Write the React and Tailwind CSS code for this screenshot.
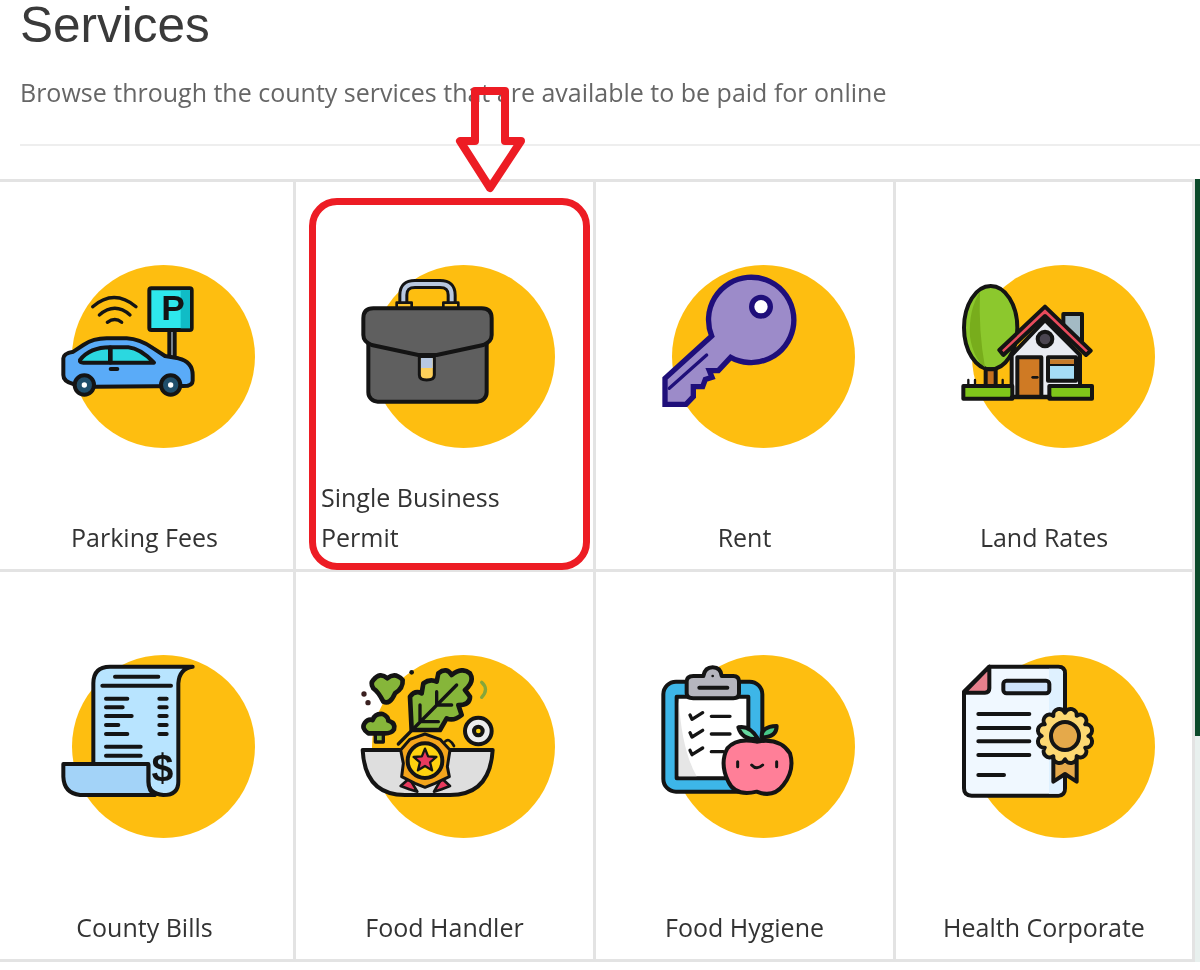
const INK = '#141414';

// scalloped edge for the seal
const scallop = (cx, cy, r, n) => {
  let d = '';
  for (let i = 0; i <= n; i++) {
    const a = (i / n) * Math.PI * 2 - Math.PI / 2;
    const x = (cx + r * Math.cos(a)).toFixed(1);
    const y = (cy + r * Math.sin(a)).toFixed(1);
    const bump = (r * Math.PI) / n;
    d += i === 0 ? `M${x},${y}` : `A${bump.toFixed(1)},${bump.toFixed(1)} 0 0 1 ${x},${y}`;
  }
  return d + 'Z';
};

function IconArt({ wide, children }) {
  return (
    <svg
      viewBox={wide ? '0 0 780 600' : '0 0 720 600'}
      className={`absolute -left-8 -top-[5px] h-[200px] blur-[0.6px] ${wide ? 'w-[260px]' : 'w-[240px]'}`}
      fill="none"
      stroke={INK}
      strokeWidth="12"
      strokeLinecap="round"
      strokeLinejoin="round"
    >
      {children}
    </svg>
  );
}

function ParkingIcon() {
  return (
    <IconArt>
      <rect x="388" y="208" width="16" height="85" fill="#a9b8c8" />
      <rect x="328" y="85" width="127" height="125" rx="6" fill="#2ee8ec" />
      <path d="M422,90 H450 V205 H422 Z" fill="#10bcc6" stroke="none" />
      <text x="364" y="180" fontSize="106" fontWeight="700" fill={INK} stroke="none" className="font-['Liberation_Sans']">P</text>
      <path d="M158,140 Q222,85 288,140 M178,165 Q225,125 270,165 M202,187 Q225,170 245,187" strokeWidth="10" />
      <path
        d="M70,295 Q70,280 100,275 L130,255 Q160,235 200,235 L260,235 Q300,237 340,265 L375,288 L415,295 Q458,305 458,345 L458,362 Q458,378 430,378 L165,380 L100,372 Q70,365 70,345 Z"
        fill="#5aabf8"
      />
      <path d="M120,300 Q150,262 210,262 L210,308 L130,308 Q118,308 120,300 Z" fill="#2bd8e0" />
      <path d="M212,262 L265,262 Q300,265 342,308 L212,308 Z" fill="#2bd8e0" />
      <path d="M212,327 H232" />
      <circle cx="133" cy="375" r="29" fill="#1f4e6b" />
      <circle cx="133" cy="375" r="8" fill="#fff" stroke="none" />
      <circle cx="392" cy="375" r="29" fill="#1f4e6b" />
      <circle cx="392" cy="375" r="8" fill="#fff" stroke="none" />
    </IconArt>
  );
}

function BriefcaseIcon() {
  return (
    <IconArt>
      <path d="M190,130 V105 Q190,72 225,72 H300 Q335,72 335,105 V130" stroke={INK} strokeWidth="30" />
      <path d="M190,130 V105 Q190,72 225,72 H300 Q335,72 335,105 V130" stroke="#b8c8e0" strokeWidth="12" />
      <rect x="170" y="128" width="45" height="18" fill="#fbc531" strokeWidth="8" />
      <rect x="310" y="128" width="45" height="18" fill="#fbc531" strokeWidth="8" />
      <rect x="85" y="225" width="355" height="200" rx="28" fill="#5f5f5f" />
      <path
        d="M100,145 H425 Q455,145 455,175 V225 Q455,245 430,255 L290,285 H235 L95,255 Q70,245 70,225 V175 Q70,145 100,145 Z"
        fill="#5f5f5f"
      />
      <path d="M238,290 H283 V345 Q283,360 260,360 Q238,360 238,345 Z" fill="#fdd05a" strokeWidth="9" />
      <rect x="243" y="294" width="35" height="30" fill="#b8c8e0" stroke="none" />
    </IconArt>
  );
}

function KeyIcon() {
  return (
    <IconArt>
      <g stroke="#1f0f7a" strokeWidth="16" strokeLinejoin="miter">
        <path
          d="M215,228 A128,128 0 1 1 272,292 L235,332 H208 L216,352 L196,358 L188,380 H160 V410 L138,433 H75 V355 Z"
          fill="#9c8bc9"
        />
        <circle cx="363" cy="140" r="28" fill="#fff" />
        <path d="M200,285 L88,385" strokeWidth="10" />
      </g>
    </IconArt>
  );
}

function HouseIcon() {
  return (
    <IconArt wide>
      <ellipse cx="152" cy="203" rx="80" ry="125" fill="#8cc82d" />
      <path d="M120,95 Q85,150 90,230 Q100,295 135,322 Q115,210 120,95 Z" fill="#78ad1c" stroke="none" />
      <rect x="137" y="328" width="30" height="50" fill="#c5701e" />
      <path d="M85,360 V378 M105,360 V378 M188,360 V378" strokeWidth="7" />
      <rect x="370" y="162" width="56" height="80" fill="#a3bac4" />
      <path d="M215,285 L315,180 L420,285 V410 H215 Z" fill="#e8ebf2" />
      <path d="M178,270 L315,140 L452,272 L438,285 L315,168 L190,285 Z" fill="#e84b5c" />
      <circle cx="315" cy="237" r="22" fill="#4a4550" />
      <rect x="232" y="292" width="72" height="118" fill="#cf7a24" />
      <path d="M278,352 H292" strokeWidth="8" />
      <rect x="324" y="292" width="84" height="70" fill="#a5dcf5" />
      <rect x="330" y="298" width="72" height="17" fill="#c77b2a" stroke="none" />
      <path d="M324,315 H408" strokeWidth="6" />
      <rect x="70" y="378" width="147" height="38" fill="#7fc61a" />
      <rect x="328" y="378" width="128" height="38" fill="#7fc61a" />
      <path d="M215,412 H330" />
    </IconArt>
  );
}

function ReceiptIcon() {
  return (
    <IconArt>
      <path d="M160,345 V100 Q160,50 210,50 H458 Q418,55 415,100 V395 Q415,435 370,435 Q325,430 325,395 V345 Z" fill="#b8e4ff" />
      <path d="M70,342 H325 V395 Q325,422 345,435 H120 Q72,430 70,380 Z" fill="#a3d3f8" />
      <path d="M225,80 H355 M187,107 H393 M198,146 H262 M198,172 H248 M198,198 H275 M198,225 H235 M198,252 H262 M198,290 H302 M198,317 H302 M358,146 H380 M358,172 H380 M358,198 H380 M358,225 H380 M358,252 H380" />
      <text x="367" y="393" fontSize="118" fontWeight="700" fill={INK} stroke="none" textAnchor="middle" className="font-['Liberation_Sans']">$</text>
    </IconArt>
  );
}

function FoodIcon() {
  const star = [];
  for (let i = 0; i < 10; i++) {
    const r = i % 2 ? 16 : 36;
    const a = (i / 10) * Math.PI * 2 - Math.PI / 2;
    star.push(`${(255 + r * Math.cos(a)).toFixed(1)},${(332 + r * Math.sin(a)).toFixed(1)}`);
  }
  return (
    <IconArt>
      <path d="M215,240 L210,140 Q225,120 245,130 L250,100 Q270,85 290,95 L295,70 Q320,50 335,75 Q365,50 390,70 Q405,95 375,120 L390,140 Q390,165 355,165 L365,195 Q340,215 320,205 L300,240 Z" fill="#86b63a" strokeWidth="14" />
      <path d="M175,282 L350,105 M240,215 V165 M240,215 H295 M290,165 V125 M290,165 H335" strokeWidth="10" />
      <path d="M100,90 Q120,65 142,85 Q165,65 188,90 Q190,115 165,130 Q150,165 130,155 Q115,125 100,115 Q90,100 100,90 Z" fill="#86b63a" strokeWidth="14" />
      <path d="M85,250 Q62,235 75,218 Q85,205 98,210 Q105,190 128,192 Q145,200 145,212 Q168,220 162,238 Q155,250 135,250 Z" fill="#86b63a" strokeWidth="14" />
      <rect x="106" y="252" width="24" height="24" fill="#86b63a" strokeWidth="10" />
      <circle cx="215" cy="67" r="7" fill={INK} stroke="none" />
      <circle cx="72" cy="132" r="8" fill="#3a2020" stroke="none" />
      <circle cx="84" cy="158" r="8" fill="#3a2020" stroke="none" />
      <path d="M425,97 Q448,118 425,142" stroke="#86a63a" strokeWidth="10" />
      <circle cx="415" cy="243" r="40" fill="#ececec" />
      <circle cx="415" cy="243" r="13" fill="#fdd20f" />
      <path d="M315,275 Q328,262 342,288" strokeWidth="8" />
      <path d="M68,300 H458 Q450,435 330,435 H195 Q75,435 68,300 Z" fill="#dedede" />
      <path d="M182,408 L208,385 L232,425 L208,418 Z M330,408 L305,385 L282,425 L305,418 Z" fill="#e83a5e" strokeWidth="8" />
      <polygon points="255,252 300,268 330,300 322,350 328,380 285,400 255,412 225,400 185,380 190,340 182,300 210,268" fill="#f4a51c" strokeWidth="9" />
      <circle cx="255" cy="332" r="52" fill="#fdd20f" />
      <polygon points={star.join(' ')} fill="#e83a5e" strokeWidth="7" />
    </IconArt>
  );
}

function HygieneIcon() {
  return (
    <IconArt>
      <rect x="70" y="95" width="297" height="330" rx="38" fill="#3db6e8" />
      <rect x="110" y="140" width="215" height="245" fill="#fff" />
      <path d="M116,146 Q125,300 170,379 H116 Z" fill="#e6e6e6" stroke="none" />
      <path d="M140,95 Q140,78 160,78 H190 Q195,52 218,52 Q242,52 245,78 H280 Q297,78 297,95 V130 Q297,145 280,145 H160 Q140,145 140,130 Z" fill="#b5b5be" />
      <circle cx="218" cy="78" r="4" fill={INK} stroke="none" />
      <path d="M178,113 H262" />
      <path d="M150,195 L156,208 L188,188 M214,199 H270 M150,248 L156,261 L188,241 M214,252 H270 M150,301 L156,314 L188,294 M214,305 H250" strokeWidth="10" />
      <path d="M295,232 Q330,225 355,268 Q305,270 295,232 Z" fill="#66d9a0" />
      <path d="M365,262 Q362,230 410,228 Q410,262 365,262 Z" fill="#48c888" />
      <path d="M350,275 Q290,262 262,295 Q238,340 265,395 Q285,440 350,425 Q400,445 430,405 Q465,360 450,310 Q420,262 350,275 Z" fill="#ff7f98" />
      <path d="M293,335 V350 M410,335 V350 M335,345 Q350,362 368,345" strokeWidth="9" />
    </IconArt>
  );
}

function CertificateIcon() {
  return (
    <IconArt wide>
      <path d="M148,50 H355 Q375,50 375,70 V415 Q375,437 355,437 H95 Q72,437 72,415 V125 Z" fill="#f0f8ff" />
      <path d="M327,56 H355 Q369,56 369,70 V415 Q369,430 355,431 H327 Z" fill="#dff1ff" stroke="none" />
      <path d="M148,50 V115 Q148,128 135,128 H72 Z" fill="#e8808c" />
      <rect x="190" y="92" width="138" height="38" rx="10" fill="#cfe3fa" />
      <path d="M115,192 H268 M115,234 H268 M115,274 H268 M115,315 H268 M115,375 H192" />
      <path d="M340,320 V395 L375,372 L410,395 V320 Z" fill="#e5a94a" />
      <path d={scallop(375, 258, 70, 12)} fill="#fdd872" />
      <circle cx="375" cy="258" r="42" fill="#e5a94a" />
    </IconArt>
  );
}

const services = [
  { name: 'Parking Fees', Icon: ParkingIcon },
  { name: 'Single Business Permit', Icon: BriefcaseIcon },
  { name: 'Rent', Icon: KeyIcon },
  { name: 'Land Rates', Icon: HouseIcon },
  { name: 'County Bills', Icon: ReceiptIcon },
  { name: 'Food Handler', Icon: FoodIcon },
  { name: 'Food Hygiene', Icon: HygieneIcon },
  { name: 'Health Corporate', Icon: CertificateIcon },
];

function ServiceCard({ name, Icon }) {
  return (
    <div className="flex h-[390px] min-w-0 flex-col border-r-[3px] border-b-[3px] border-[#e3e3e3] pt-[83px] pb-[12px]">
      <div className="relative ml-[76px] h-[183px] w-[183px] shrink-0 rounded-full bg-[#febe10]">
        <Icon />
      </div>
      <div className="mt-auto flex justify-center px-[25px]">
        <span className="text-[25px] leading-[40px] text-[#333] blur-[0.3px]">{name}</span>
      </div>
    </div>
  );
}

export default function App() {
  return (
    <div className="relative h-[970px] w-[1200px] overflow-hidden bg-white font-['Open_Sans',sans-serif]">
      <div className="pl-5">
        <h1 className="h-[58px] font-['Liberation_Sans',sans-serif] text-[49.5px] leading-[50px] text-[#3a3a3a] blur-[0.3px]">Services</h1>
        <p className="mt-[14px] text-[25px] leading-[40px] text-[#666] blur-[0.3px]">
          Browse through the county services that are available to be paid for online
        </p>
        <hr className="mt-[32px] border-t-2 border-[#eeeeee]" />
      </div>

      <div className="mt-[33px] flex">
        <div className="-ml-1 grid w-[1199px] grid-cols-[300px_300px_300px_299px] border-t-[3px] border-[#e3e3e3]">
          {services.map((s) => (
            <ServiceCard key={s.name} name={s.name} Icon={s.Icon} />
          ))}
        </div>
        <div className="flex w-[5px] flex-col">
          <div className="h-[557px] bg-[#0b4a2a]" />
          <div className="flex-1 bg-[#e8f0ee]" />
        </div>
      </div>

      {/* red annotation drawn over the page */}
      <svg viewBox="0 0 80 115" className="absolute left-[450px] top-[82px] h-[115px] w-[80px]" fill="none" stroke="#ed1c24" strokeWidth="8" strokeLinejoin="round">
        <path d="M25,9 H55 V59 H71 L40,106 L10,59 H25 Z" />
      </svg>
      <div className="absolute left-[309px] top-[198px] h-[372px] w-[281px] rounded-[28px] border-[7px] border-[#ed1c24]" />
    </div>
  );
}
